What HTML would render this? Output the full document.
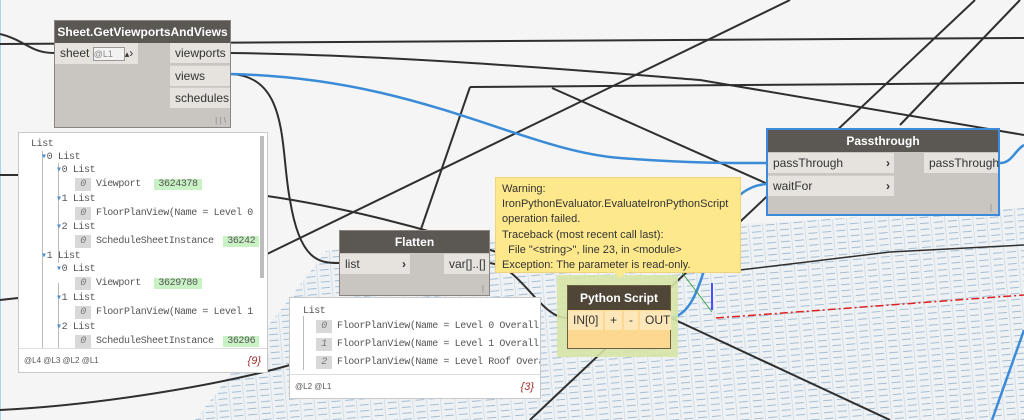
<!DOCTYPE html>
<html><head><meta charset="utf-8"><style>
*{margin:0;padding:0;box-sizing:border-box}
body{width:1024px;height:420px;overflow:hidden;background:#f5f5f5;position:relative;font-family:"Liberation Sans",sans-serif;font-size:12px;color:#333}
.abs{position:absolute}
.node{position:absolute;background:#c9c5c0;border:1px solid #8a8580}
.hdr{position:absolute;left:0;right:0;top:0;height:22px;background:#5b5753;color:#fff;font-weight:bold;text-align:center;line-height:22px;font-size:12px}
.port{position:absolute;background:#e6e3df;line-height:20px;padding-left:5px;font-size:12px;color:#333;white-space:nowrap}
.watch{position:absolute;background:#fff;border:1px solid #c9c9c9}
.m{position:absolute;font-family:"Liberation Mono",monospace;font-size:10px;letter-spacing:-0.4px;color:#555;white-space:nowrap;line-height:13px}
.ix{display:inline-block;background:#d8d8d8;color:#777;width:16px;text-align:center;margin-right:5px;font-style:italic}
.g{background:#c9f2c4;padding:0 4px}
.foot{position:absolute;left:0;right:0;bottom:0;height:24px;border-top:1px solid #ddd;font-size:8px;color:#555;line-height:24px;padding-left:5px}
</style></head><body>
<svg class="abs" style="left:0;top:0" width="1024" height="420">
<defs>
<pattern id="gp" width="14" height="6" patternUnits="userSpaceOnUse" patternTransform="rotate(-5)">
<rect width="14" height="6" fill="#eef2f5"/>
<line x1="1" y1="3" x2="10" y2="3" stroke="#a6bdd2" stroke-width="1"/>
<line x1="12" y1="0" x2="12" y2="6" stroke="#d0dbe4" stroke-width="0.8"/>
</pattern>
</defs>
<polygon points="327,250 600,232 1024,208 1024,420 195,420" fill="url(#gp)"/>
<line x1="0.5" y1="0" x2="0.5" y2="420" stroke="#aad4ee"/>
<g fill="none" stroke="#2f2f2f" stroke-width="2">
<path d="M0,44 L1024,38"/>
<path d="M0,34 C25,40 30,53 54,53"/>
<path d="M230,53 C400,55 600,72 700,80 L1024,135"/>
<path d="M470,87 L1024,83"/>
<path d="M470,87 L420,232"/>
<path d="M552,88 L770,185"/>
<path d="M230,74 C290,76 280,150 290,200 C300,262 320,263 339,263"/>
<path d="M790,0 L265,255"/>
<path d="M975,0 L530,420"/>
<path d="M1020,0 L900,125"/>
<path d="M0,175 L18,175"/>
<path d="M0,300 L18,298"/>
<path d="M267,196 C330,205 420,225 520,260"/>
<path d="M489,263 C520,265 540,318 567,318"/>
<path d="M671,318 L890,420"/>
<path d="M740,270 L890,252 L1024,245" stroke-width="1.5"/>
<path d="M0,410 C100,405 220,385 290,365"/>
</g>
<g fill="none" stroke="#3a8bd8" stroke-width="2.5">
<path d="M230,74 C420,78 520,150 620,158 C700,164 740,163 766,163"/>
<path d="M671,318 C715,310 700,190 766,184"/>
<path d="M1000,163 C1012,163 1015,150 1024,145"/>
<path d="M1024,330 L992,420"/>
</g>
<line x1="712" y1="283" x2="712" y2="310" stroke="#1a1aff" stroke-width="1.5"/>
<line x1="680" y1="270" x2="712" y2="312" stroke="#2a9a2a" stroke-width="0.8"/>
<path d="M716,318 L1024,295" stroke="#e02020" stroke-width="1.5" stroke-dasharray="8,3,2,3" fill="none"/>
<rect x="557" y="275" width="121" height="82" fill="#d6e4a6" opacity="0.9"/>
</svg>

<div class="node" style="left:54px;top:20px;width:177px;height:108px">
<div class="hdr">Sheet.GetViewportsAndViews</div>
<div class="port" style="left:0;top:22px;width:83px">sheet <span style="display:inline-block;border:1px solid #999;background:#f2f2f2;width:32px;height:14px;line-height:12px;font-size:9px;color:#888;vertical-align:middle">@L1</span><span style="font-size:9px">▴</span>›</div>
<div class="port" style="left:115px;top:22px;width:60px">viewports</div>
<div class="port" style="left:115px;top:44px;width:60px;border-top:1px solid #d0ccc8">views</div>
<div class="port" style="left:115px;top:66px;width:60px;border-top:1px solid #d0ccc8">schedules</div>
<div class="abs" style="right:4px;bottom:2px;font-size:8px;color:#888">| | \</div>
</div>

<div class="watch" style="left:18px;top:132px;width:250px;height:241px;overflow:hidden">
<div class="abs" style="left:241px;top:3px;width:4px;height:142px;background:#bdbdbd"></div>
<div class="abs" style="left:23px;top:18px;width:1px;height:257px;background:#bbb"></div>
<div class="abs" style="left:39px;top:30px;width:1px;height:100px;background:#bbb"></div>
<div class="abs" style="left:39px;top:150px;width:1px;height:100px;background:#bbb"></div>
<div class="m" style="left:12px;top:5px">List</div>
<div class="m" style="left:22px;top:18px"><span style="color:#4a8fd0">▾</span>0 List</div>
<div class="m" style="left:37px;top:31px"><span style="color:#4a8fd0">▾</span>0 List</div>
<div class="m" style="left:56px;top:45px"><span class="ix">0</span>Viewport <span class="g" style="margin-left:8px">3624378</span></div>
<div class="m" style="left:37px;top:60px"><span style="color:#4a8fd0">▾</span>1 List</div>
<div class="m" style="left:56px;top:74px"><span class="ix">0</span>FloorPlanView(Name = Level 0</div>
<div class="m" style="left:37px;top:88px"><span style="color:#4a8fd0">▾</span>2 List</div>
<div class="m" style="left:56px;top:102px"><span class="ix">0</span>ScheduleSheetInstance <span class="g" style="margin-left:4px">36242</span></div>
<div class="m" style="left:22px;top:117px"><span style="color:#4a8fd0">▾</span>1 List</div>
<div class="m" style="left:37px;top:130px"><span style="color:#4a8fd0">▾</span>0 List</div>
<div class="m" style="left:56px;top:144px"><span class="ix">0</span>Viewport <span class="g" style="margin-left:8px">3629780</span></div>
<div class="m" style="left:37px;top:159px"><span style="color:#4a8fd0">▾</span>1 List</div>
<div class="m" style="left:56px;top:173px"><span class="ix">0</span>FloorPlanView(Name = Level 1</div>
<div class="m" style="left:37px;top:188px"><span style="color:#4a8fd0">▾</span>2 List</div>
<div class="m" style="left:56px;top:202px"><span class="ix">0</span>ScheduleSheetInstance <span class="g" style="margin-left:4px">36296</span></div>
<div class="foot" style="background:#fff">@L4 @L3 @L2 @L1<span style="position:absolute;right:6px;font-size:11px;color:#a03030;font-style:italic">{9}</span></div>
</div>

<div class="node" style="left:339px;top:230px;width:151px;height:66px">
<div class="hdr">Flatten</div>
<div class="port" style="left:0;top:23px;width:70px">list<span style="position:absolute;right:4px;font-weight:bold">›</span></div>
<div class="port" style="left:104px;top:23px;width:45px">var[]..[]</div>
<div class="abs" style="right:5px;bottom:2px;font-size:8px;color:#888">|</div>
</div>

<div class="watch" style="left:289px;top:297px;width:252px;height:102px;overflow:hidden">
<div class="abs" style="left:13px;top:18px;width:1px;height:54px;background:#bbb"></div>
<div class="m" style="left:13px;top:7px">List</div>
<div class="m" style="left:26px;top:22px"><span class="ix">0</span>FloorPlanView(Name = Level 0 Overall</div>
<div class="m" style="left:26px;top:40px"><span class="ix">1</span>FloorPlanView(Name = Level 1 Overall</div>
<div class="m" style="left:26px;top:58px"><span class="ix">2</span>FloorPlanView(Name = Level Roof Overa</div>
<div class="foot" style="background:#fff">@L2 @L1<span style="position:absolute;right:6px;font-size:11px;color:#a03030;font-style:italic">{3}</span></div>
</div>

<div class="node" style="left:567px;top:285px;width:104px;height:64px;background:#fdd890;border-color:#6e5e40">
<div class="hdr" style="height:24px;line-height:24px;background:#4f4638">Python Script</div>
<div class="port" style="left:0;top:25px;width:35px;background:#fde7b8;line-height:19px">IN[0]</div>
<div class="port" style="left:37px;top:25px;width:17px;background:#fde7b8;line-height:19px">+</div>
<div class="port" style="left:56px;top:25px;width:14px;background:#fde7b8;line-height:19px">-</div>
<div class="port" style="left:72px;top:25px;width:31px;background:#fde7b8;line-height:19px">OUT</div>
</div>

<div class="abs" style="left:495px;top:177px;width:246px;height:96px;background:#fde88c;border:1px solid #efd37a;padding:4px 6px;font-size:11px;line-height:15.2px;color:#333">Warning:<br>IronPythonEvaluator.EvaluateIronPythonScript<br>operation failed.<br>Traceback (most recent call last):<br>&nbsp;&nbsp;File "&lt;string&gt;", line 23, in &lt;module&gt;<br>Exception: The parameter is read-only.</div>
<div class="abs" style="left:614px;top:272px;width:0;height:0;border-left:6px solid transparent;border-right:6px solid transparent;border-top:6px solid #fde88c"></div>

<div class="node" style="left:766px;top:128px;width:234px;height:88px;border:2px solid #3a8bd8">
<div class="hdr" style="height:22px">Passthrough</div>
<div class="port" style="left:0;top:23px;width:126px">passThrough<span style="position:absolute;right:4px;font-weight:bold">›</span></div>
<div class="port" style="left:0;top:45px;width:126px;border-top:1px solid #d0ccc8">waitFor<span style="position:absolute;right:4px;font-weight:bold">›</span></div>
<div class="port" style="left:156px;top:23px;width:74px">passThrough</div>
<div class="abs" style="right:6px;bottom:2px;font-size:8px;color:#888">|</div>
</div>
</body></html>
